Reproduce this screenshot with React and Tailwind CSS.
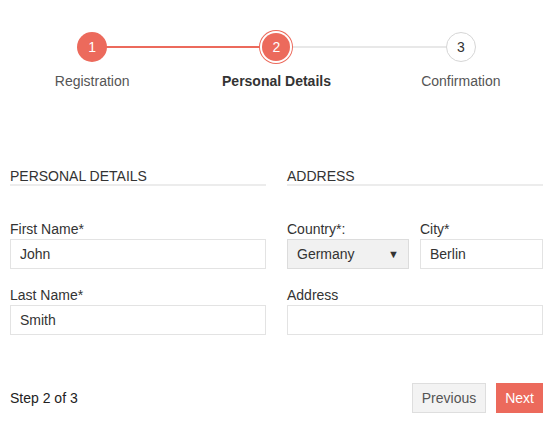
import { useState } from "react";

const steps = ['Registration', 'Personal Details', 'Confirmation'];

function Stepper({ current }) {
    return (
        <div className="grid grid-cols-3 pt-[32px]">
            {steps.map((label, i) => {
                const done = i < current;
                const active = i === current;
                return (
                    <div key={label} className="relative flex flex-col items-center">
                        {i > 0 && (
                            <div className={`absolute left-0 right-1/2 top-[14px] h-[2px] ${i <= current ? 'bg-[#ec6a5c]' : 'bg-[#e8e8e8]'}`} />
                        )}
                        {i < steps.length - 1 && (
                            <div className={`absolute left-1/2 right-0 top-[14px] h-[2px] ${i < current ? 'bg-[#ec6a5c]' : 'bg-[#e8e8e8]'}`} />
                        )}
                        {active ? (
                            <div className="relative z-10 mt-[1px] mb-[1px] flex h-[28px] w-[28px] items-center justify-center rounded-full bg-[#ec6a5c] text-[14px] text-white shadow-[0_0_0_2px_#fff,0_0_0_3px_#ec6a5c]">
                                {i + 1}
                            </div>
                        ) : done ? (
                            <div className="relative z-10 flex h-[30px] w-[30px] items-center justify-center rounded-full bg-[#ec6a5c] text-[14px] text-white">
                                {i + 1}
                            </div>
                        ) : (
                            <div className="relative z-10 flex h-[30px] w-[30px] items-center justify-center rounded-full border border-[#d6d6d6] bg-white text-[14px] text-[#333]">
                                {i + 1}
                            </div>
                        )}
                        <p className={`mt-[10px] text-[14px] leading-[18px] ${active ? 'font-bold text-[#333]' : 'text-[#555]'}`}>{label}</p>
                    </div>
                );
            })}
        </div>
    );
}

function Field({ label, value, onChange, className = '' }) {
    return (
        <div className={`flex flex-col ${className}`}>
            <label className="text-[14px] leading-[16px] text-[#333] mb-[2px]">{label}</label>
            <input
                value={value}
                onChange={onChange}
                className="h-[30px] w-full border border-[#e3e3e3] bg-white px-[9px] text-[14px] text-[#333] outline-none"
            />
        </div>
    );
}

export default function App() {

    const [ formData, setFormData ] = useState({
        firstName: 'John',
        lastName: 'Smith',
        country: 'Germany',
        city: 'Berlin',
        address: ''
    });

    const handleChange = (name) => (e) => {
        const { value } = e.target;
        setFormData((prev) => ({ ...prev, [name]: value }));
    };

    return (
        <div className="min-h-[430px] w-full bg-white font-['Liberation_Sans',Arial,sans-serif] text-[#333]">
            <Stepper current={1} />

            <div className="mt-[77px] grid grid-cols-2 gap-x-[21px] px-[10px]">
                <section>
                    <h3 className="border-b-2 border-[#ececec] pt-[1px] text-[14px] leading-[16px] text-[#333]">PERSONAL DETAILS</h3>
                    <Field label="First Name*" value={formData.firstName} onChange={handleChange('firstName')} className="mt-[35px]" />
                    <Field label="Last Name*" value={formData.lastName} onChange={handleChange('lastName')} className="mt-[18px]" />
                </section>
                <section>
                    <h3 className="border-b-2 border-[#ececec] pt-[1px] text-[14px] leading-[16px] text-[#333]">ADDRESS</h3>
                    <div className="mt-[35px] flex gap-[11px]">
                        <div className="flex w-[122px] flex-col">
                            <label className="text-[14px] leading-[16px] text-[#333] mb-[2px]">Country*:</label>
                            <div className="relative h-[30px]">
                                <select
                                    value={formData.country}
                                    onChange={handleChange('country')}
                                    className="h-[30px] w-full appearance-none border border-[#dcdcdc] bg-[#f1f1f1] px-[9px] text-[14px] text-[#333] outline-none"
                                >
                                    <option>Germany</option>
                                    <option>France</option>
                                    <option>Spain</option>
                                </select>
                                <span className="pointer-events-none absolute right-[10px] top-[8px] text-[11px] leading-[14px] text-[#333]">▼</span>
                            </div>
                        </div>
                        <Field label="City*" value={formData.city} onChange={handleChange('city')} className="flex-1" />
                    </div>
                    <Field label="Address" value={formData.address} onChange={handleChange('address')} className="mt-[18px]" />
                </section>
            </div>

            <div className="mt-[48px] flex items-center justify-between px-[10px]">
                <p className="text-[14px] text-[#222]">Step 2 of 3</p>
                <div className="flex gap-[10px]">
                    <button className="h-[30px] border border-[#dedede] bg-[#f3f3f3] px-[9px] text-[14px] text-[#555]">Previous</button>
                    <button className="h-[30px] bg-[#ec6a5c] px-[9px] text-[14px] text-white">Next</button>
                </div>
            </div>
        </div>
    );
}
